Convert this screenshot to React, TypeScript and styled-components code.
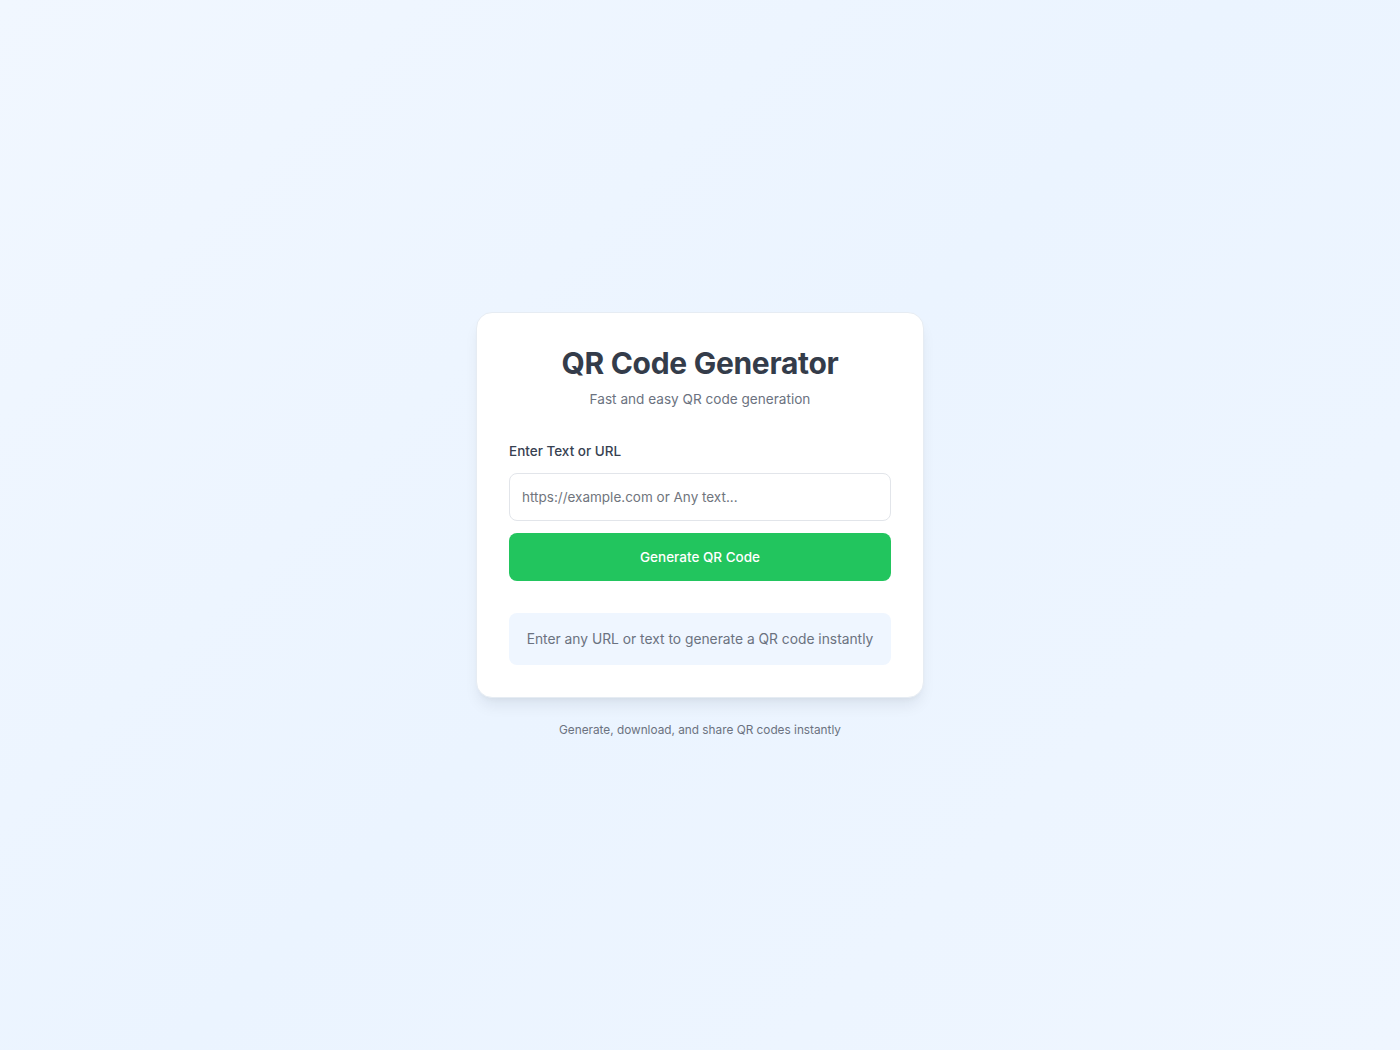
import * as React from 'react'
import styled, { createGlobalStyle } from 'styled-components'

const GlobalStyle = createGlobalStyle`
  * { box-sizing: border-box; }
  html, body { margin: 0; padding: 0; }
  body {
    font-family: Inter, "Liberation Sans", sans-serif;
    -webkit-font-smoothing: antialiased;
  }
`

const Page = styled.div`
  min-height: 100vh;
  display: flex;
  flex-direction: column;
  align-items: center;
  justify-content: center;
  padding: 16px;
  background: linear-gradient(135deg, #f1f7ff 0%, #ebf4ff 50%, #eff6ff 100%);
`

const Card = styled.div`
  width: 448px;
  background: #ffffff;
  border: 1px solid #e6ecf3;
  border-radius: 16px;
  padding: 32px;
  box-shadow: 0 10px 15px -3px rgba(15, 23, 42, 0.08), 0 4px 6px -4px rgba(15, 23, 42, 0.06);
`

const Header = styled.div`
  text-align: center;
  margin-bottom: 32px;
`

const Title = styled.h1`
  margin: 0;
  font-size: 30px;
  line-height: 36px;
  font-weight: 700;
  color: #343c4a;
  letter-spacing: -0.3px;
`

const Subtitle = styled.p`
  margin: 8px 0 0;
  font-size: 13.6px;
  line-height: 20px;
  color: #6b7280;
`

const Label = styled.label`
  display: block;
  font-size: 13.5px;
  line-height: 20px;
  font-weight: 500;
  color: #374151;
  margin-bottom: 12px;
`

const Input = styled.input`
  display: block;
  width: 100%;
  height: 48px;
  padding: 0 12px;
  border: 1px solid #e2e5ea;
  border-radius: 8px;
  font-family: inherit;
  font-size: 13.5px;
  color: #374151;
  outline: none;
  background: #fff;

  &::placeholder {
    color: #70757d;
  }
`

const Button = styled.button`
  display: block;
  width: 100%;
  height: 48px;
  margin-top: 12px;
  border: none;
  border-radius: 8px;
  background: #22c55e;
  color: #ffffff;
  font-family: inherit;
  font-size: 13.5px;
  font-weight: 500;
  cursor: pointer;
`

const Hint = styled.div`
  margin-top: 32px;
  padding: 16px;
  border-radius: 8px;
  background: #eff6ff;
  text-align: center;
  font-size: 13.8px;
  line-height: 20px;
  color: #6b7280;
`

const Footer = styled.p`
  margin: 24px 0 0;
  font-size: 11.8px;
  line-height: 16px;
  color: #6b7280;
  text-align: center;
`

export default function App() {
  const [value, setValue] = React.useState('')
  return (
    <Page>
      <GlobalStyle />
      <Card>
        <Header>
          <Title>QR Code Generator</Title>
          <Subtitle>Fast and easy QR code generation</Subtitle>
        </Header>
        <Label htmlFor="qr-input">Enter Text or URL</Label>
        <Input
          id="qr-input"
          value={value}
          onChange={e => setValue(e.target.value)}
          placeholder="https://example.com or Any text..."
        />
        <Button>Generate QR Code</Button>
        <Hint>Enter any URL or text to generate a QR code instantly</Hint>
      </Card>
      <Footer>Generate, download, and share QR codes instantly</Footer>
    </Page>
  )
}
